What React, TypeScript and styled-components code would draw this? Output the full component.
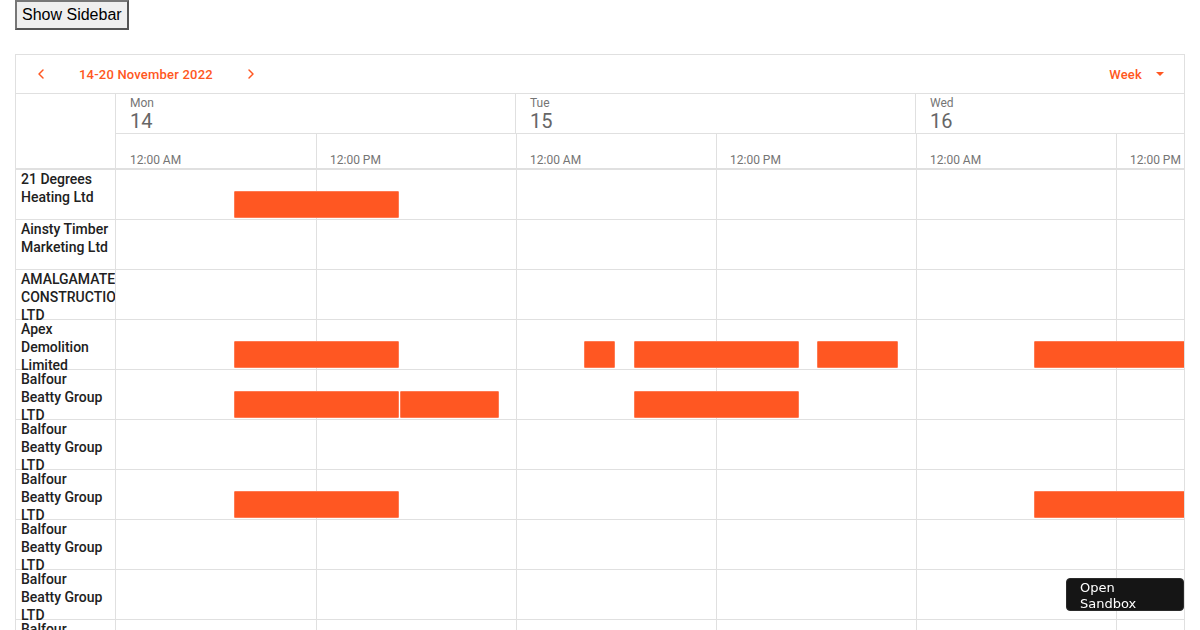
import React from 'react'
import styled, { createGlobalStyle } from 'styled-components'
import { ChevronLeft, ChevronRight } from 'lucide-react'

type Booking = { left: number; width: number }
type Row = { name: string; bookings: Booking[] }

const SLOT = 200
const DAYS = [
  { label: 'Mon', date: 14 },
  { label: 'Tue', date: 15 },
  { label: 'Wed', date: 16 },
  { label: 'Thu', date: 17 },
]

const rows: Row[] = [
  { name: '21 Degrees Heating Ltd', bookings: [{ left: 118, width: 165 }] },
  { name: 'Ainsty Timber Marketing Ltd', bookings: [] },
  { name: 'AMALGAMATED CONSTRUCTION LTD', bookings: [] },
  {
    name: 'Apex Demolition Limited',
    bookings: [
      { left: 118, width: 165 },
      { left: 468, width: 31 },
      { left: 518, width: 165 },
      { left: 701, width: 81 },
      { left: 918, width: 165 },
    ],
  },
  {
    name: 'Balfour Beatty Group LTD',
    bookings: [
      { left: 118, width: 165 },
      { left: 284, width: 99 },
      { left: 518, width: 165 },
    ],
  },
  { name: 'Balfour Beatty Group LTD', bookings: [] },
  {
    name: 'Balfour Beatty Group LTD',
    bookings: [
      { left: 118, width: 165 },
      { left: 918, width: 165 },
    ],
  },
  { name: 'Balfour Beatty Group LTD', bookings: [] },
  { name: 'Balfour Beatty Group LTD', bookings: [] },
  { name: 'Balfour Beatty Group LTD', bookings: [] },
]

const App: React.FC = () => {
  return (
    <>
      <GlobalStyle />
      <Page>
        <SidebarButton>Show Sidebar</SidebarButton>
        <Scheduler>
          <Toolbar>
            <NavGroup>
              <IconButton>
                <ChevronLeft size={16} strokeWidth={2.2} />
              </IconButton>
              <RangeLabel>14-20 November 2022</RangeLabel>
              <IconButton>
                <ChevronRight size={16} strokeWidth={2.2} />
              </IconButton>
            </NavGroup>
            <ViewSelect>
              Week
              <Caret />
            </ViewSelect>
          </Toolbar>

          <Body>
            <ResourceColumn>
              <CornerCell />
              {rows.map((row, i) => (
                <ResourceCell key={i}>{row.name}</ResourceCell>
              ))}
            </ResourceColumn>

            <Timeline>
              <Track>
                <DayHeaderRow>
                  {DAYS.map((d) => (
                    <DayCell key={d.date}>
                      <DayName>{d.label}</DayName>
                      <DayNumber>{d.date}</DayNumber>
                    </DayCell>
                  ))}
                </DayHeaderRow>
                <TimeHeaderRow>
                  {DAYS.map((d) => (
                    <React.Fragment key={d.date}>
                      <TimeCell>12:00 AM</TimeCell>
                      <TimeCell>12:00 PM</TimeCell>
                    </React.Fragment>
                  ))}
                </TimeHeaderRow>
                {rows.map((row, i) => (
                  <TimelineRow key={i}>
                    {DAYS.map((d) => (
                      <React.Fragment key={d.date}>
                        <SlotCell />
                        <SlotCell />
                      </React.Fragment>
                    ))}
                    {row.bookings.map((b, j) => (
                      <Event key={j} style={{ left: b.left, width: b.width }} />
                    ))}
                  </TimelineRow>
                ))}
              </Track>
            </Timeline>
          </Body>
        </Scheduler>
      </Page>
      <SandboxButton>Open Sandbox</SandboxButton>
    </>
  )
}

export default App

const GlobalStyle = createGlobalStyle`
  html, body {
    margin: 0;
    padding: 0;
    background: #fff;
    overflow: hidden;
  }
  body {
    font-family: Roboto, "Liberation Sans", sans-serif;
  }
`

const Page = styled.div`
  padding: 0 15px;
`

const SidebarButton = styled.button`
  display: block;
  font-family: 'Liberation Sans', Arial, sans-serif;
  font-size: 16px;
  height: 30px;
  padding: 0 5px;
  background: #efefef;
  color: #000;
  border: 2px solid #555;
  border-top-color: #777;
  border-left-color: #777;
  border-radius: 0;
`

const Scheduler = styled.div`
  margin-top: 24px;
  border: 1px solid #e0e0e0;
  overflow: hidden;
`

const Toolbar = styled.div`
  height: 38px;
  display: flex;
  align-items: center;
  justify-content: space-between;
  border-bottom: 1px solid #e0e0e0;
  padding: 0 20px 0 15px;
  color: #ff5722;
`

const NavGroup = styled.div`
  display: flex;
  align-items: center;
`

const IconButton = styled.span`
  width: 20px;
  height: 20px;
  display: inline-flex;
  align-items: center;
  justify-content: center;
  color: #ff5722;
`

const RangeLabel = styled.span`
  font-size: 13px;
  font-weight: 500;
  margin: 0 28px 0 28px;
  letter-spacing: 0.2px;
`

const ViewSelect = styled.div`
  display: flex;
  align-items: center;
  font-size: 13px;
  font-weight: 500;
  letter-spacing: 0.2px;
`

const Caret = styled.span`
  margin-left: 14px;
  width: 0;
  height: 0;
  border-left: 4px solid transparent;
  border-right: 4px solid transparent;
  border-top: 4px solid #ff5722;
`

const Body = styled.div`
  display: flex;
`

const ResourceColumn = styled.div`
  width: 100px;
  flex: none;
  box-sizing: border-box;
  border-right: 1px solid #e0e0e0;
`

const CornerCell = styled.div`
  height: 74px;
  border-bottom: 2px solid #e0e0e0;
`

const ResourceCell = styled.div`
  height: 50px;
  box-sizing: border-box;
  border-bottom: 1px solid #e0e0e0;
  padding: 0 6px 0 5px;
  font-size: 14px;
  font-weight: 500;
  line-height: 18px;
  color: #212121;
  overflow-x: clip;
  overflow-y: visible;
  position: relative;
  z-index: 1;
`

const Timeline = styled.div`
  flex: 1;
  min-width: 0;
  overflow: hidden;
`

const Track = styled.div`
  width: ${DAYS.length * SLOT * 2 + 1}px;
`

const DayHeaderRow = styled.div`
  display: flex;
  height: 39px;
  border-bottom: 1px solid #e0e0e0;
`

const DayCell = styled.div`
  width: ${SLOT * 2}px;
  flex: none;
  box-sizing: border-box;
  border-right: 1px solid #e0e0e0;
  padding: 2px 14px 0;
  color: #757575;
`

const DayName = styled.div`
  font-size: 12px;
  line-height: 14px;
`

const DayNumber = styled.div`
  font-size: 20px;
  line-height: 22px;
  color: #666;
`

const TimeHeaderRow = styled.div`
  display: flex;
  height: 34px;
  padding-left: 1px;
  border-bottom: 2px solid #e0e0e0;
`

const TimeCell = styled.div`
  width: ${SLOT}px;
  flex: none;
  box-sizing: border-box;
  border-right: 1px solid #e0e0e0;
  display: flex;
  align-items: flex-end;
  padding: 0 0 1px 13px;
  font-size: 12px;
  line-height: 14px;
  color: #757575;
`

const TimelineRow = styled.div`
  position: relative;
  display: flex;
  height: 49px;
  padding-left: 1px;
  border-bottom: 1px solid #e0e0e0;
`

const SlotCell = styled.div`
  width: ${SLOT}px;
  flex: none;
  box-sizing: border-box;
  border-right: 1px solid #e0e0e0;
`

const Event = styled.div`
  position: absolute;
  top: 21px;
  height: 27px;
  box-sizing: border-box;
  background: #ff5722;
  border: 1px solid #ff7a52;
  border-radius: 1px;
`

const SandboxButton = styled.a`
  position: fixed;
  right: 16px;
  bottom: 19px;
  width: 118px;
  height: 33px;
  box-sizing: border-box;
  padding: 1px 50px 0 13px;
  background: #151515;
  border: 1px solid #2a2a2a;
  border-radius: 4px;
  color: #fff;
  font-family: 'DejaVu Sans', Verdana, sans-serif;
  font-size: 13px;
  line-height: 16px;
  z-index: 10;
`
